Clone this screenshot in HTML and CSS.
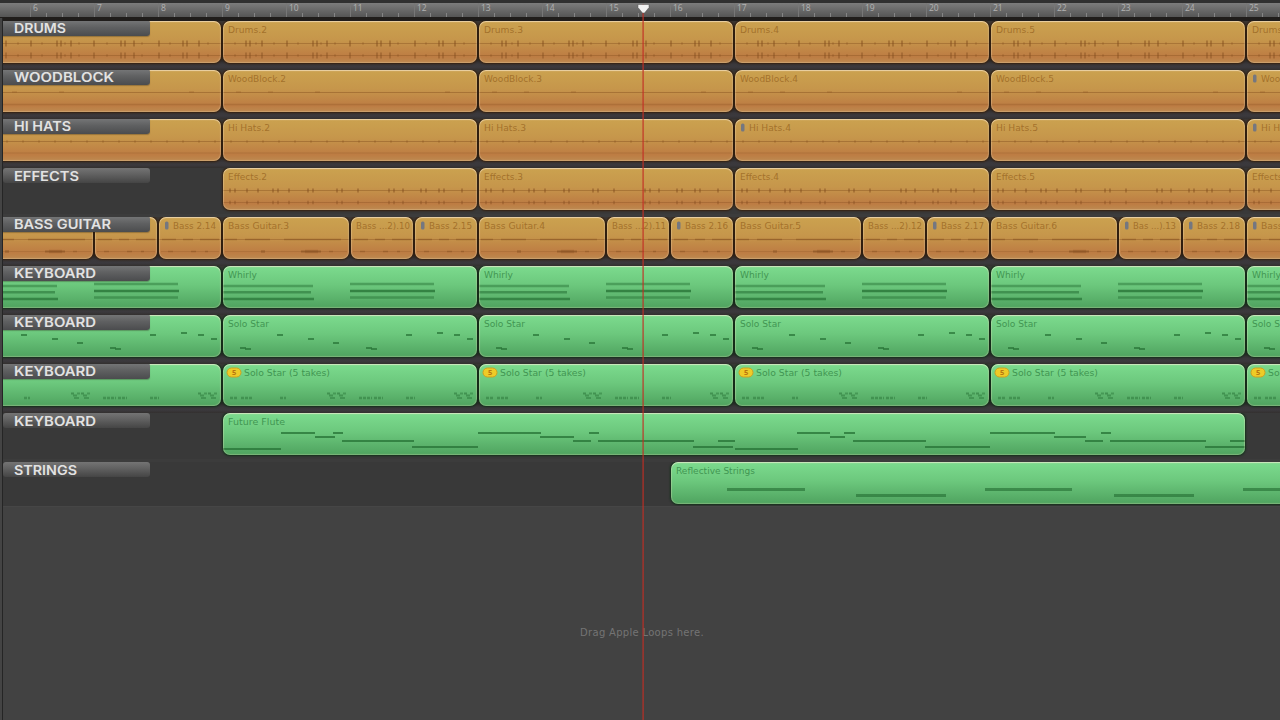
FILE: index.html
```html
<!DOCTYPE html>
<html lang="en">
<head>
<meta charset="utf-8">
<title>Timeline</title>
<link rel="stylesheet" href="styles.css">
</head>
<body>
<main class="timeline">
  <header class="ruler" id="ruler"></header>
  <section class="lanes" id="lanes"></section>
  <section class="dropzone"><p class="hint">Drag Apple Loops here.</p></section>
  <div class="playhead">
    <svg class="playhead-grip" width="13" height="10" viewBox="0 0 13 10"><path d="M1 .5H12V3.5L7.5 9H5.5L1 3.5Z"/></svg>
  </div>
</main>
<script src="timeline.js"></script>
</body>
</html>
```
FILE: styles.css
```css
body { margin: 0; background: #424242; font-family: "Open Sans", "Noto Sans", sans-serif; }
.timeline { position: relative; width: 1280px; height: 720px; overflow: hidden; display: flex; flex-direction: column; background: #424242; }
.timeline::after { content: ""; position: absolute; left: 0; top: 18px; bottom: 0; width: 2px; background: #444; border-right: 1px solid #252525; }

.ruler { box-sizing: border-box; height: 21px; flex: none; display: flex; overflow: hidden; border-top: 3px solid #303030; border-bottom: 4px solid #201d1b; background: linear-gradient(#7c7c7c, #555); }
.measure { box-sizing: border-box; flex: none; width: 64px; height: 14px; padding-left: 2px; border-left: 1px solid #777; font-size: 8.5px; line-height: 9px; color: #b2b2b2;
  background: repeating-linear-gradient(90deg, transparent 0 15px, #858585 15px 16px) 0 100% / 64px 4px no-repeat; }
.measure:first-child { margin-left: 30px; }

.lanes { flex: none; background: #393939; }
.lane { position: relative; height: 49px; display: flex; align-items: flex-start; overflow: hidden; box-sizing: border-box; padding-left: 3px; }
.lane-filled { background: linear-gradient(#3b3836 3px, #1f1c1a 9px, #1f1c1a 36px, #3a383b 43px, #3b393d 46px, #33302f 49px); }
.lane-empty { box-shadow: inset 0 -3px #3c3c3c; }
.lane:last-child { height: 45px; box-shadow: none; border-bottom: 1px solid #464646; }
.label { position: absolute; left: 3px; top: -1px; width: 147px; height: 16px; border-radius: 0 3px 3px 0; background: linear-gradient(#777879, #606162 45%, #4b4c4e); box-shadow: 0 1px 1px rgba(40, 30, 20, .3); }
.lane-empty .label { top: 0; height: 15px; background: linear-gradient(#747474, #626262 40%, #454545); box-shadow: none; border-radius: 3px; }
.label-text { fill: #e2e2e2; font: 600 13px Inter, sans-serif; }

.clip { position: relative; box-sizing: border-box; flex: none; height: 42px; margin-right: 2px; border-radius: 7px; overflow: hidden; }
.clip.audio { background: linear-gradient(#cba24f, #c6964b 45%, #bd7c43 85%, #bd8a50); box-shadow: 0 0 2px 1px #35200e; }
.clip.midi { background: linear-gradient(#7cdb8e, #6cc87d 45%, #4fa35f); box-shadow: 0 0 2px 1px #13301a; }
.clip::after { content: ""; position: absolute; inset: 0; border-radius: 7px; box-shadow: inset 0 1px 1px rgba(255, 240, 225, .5), inset 0 0 1px 1px rgba(255, 235, 200, .25); }
.clip-art { display: block; }
.clip-name { font: 9.5px "DejaVu Sans", sans-serif; }
.audio .clip-name { fill: #94601c; fill-opacity: .72; }
.midi .clip-name { fill: #338544; fill-opacity: .8; }
.wave { stroke: #7e491b; fill: none; }
.note { stroke: #297538; fill: none; }
.loop { fill: #747780; }
.badge { fill: #efcb27; stroke: #cda020; }
.badge-text { font: bold 7.5px "Open Sans", sans-serif; fill: #b97510; }

.dropzone { flex: 1; display: flex; justify-content: center; padding-top: 118px; }
.hint { margin: 0; padding-left: 4px; font: 10px/16px "DejaVu Sans", sans-serif; letter-spacing: .3px; color: #747474; }
.playhead { position: absolute; left: 642px; top: 4px; bottom: 0; width: 2px; background: linear-gradient(90deg, rgba(190, 45, 35, .4), rgba(195, 45, 35, .72)); z-index: 2; }
.playhead-grip { position: absolute; left: -5px; top: 0; fill: #f2f2f2; stroke: #555; stroke-width: .5; }
```
FILE: timeline.js
```js
const FOUR_BARS = 256;

const line = (x1, x2, y, w = 1, o = .5, cls = "wave") =>
  `<path class="${cls}" d="M${x1} ${y}H${x2}" stroke-width="${w}" stroke-opacity="${o}"/>`;
const tick = (x, y, h, o = .5, w = 1.5) =>
  `<path class="wave" d="M${x} ${y - h / 2}v${h}" stroke-width="${w}" stroke-opacity="${o}"/>`;
const note = (x1, x2, y, w = 1.8, o = .65) => line(x1, x2, y, w, o, "note");

const art = {
  drums() {
    let s = line(0, 256, 22.5, 1, .38) + line(0, 256, 34.5, 1, .34);
    for (const x of [23, 27, 39, 64, 90, 94, 104, 127, 154, 158, 167, 192, 216, 220, 232]) {
      s += tick(x, 22.5, 6, .42, 2) + tick(x, 34.5, 6, .36, 2);
    }
    for (const x of [12, 33, 51, 75, 98, 112, 140, 175, 203, 241]) s += tick(x, 22.5, 2.5, .3) + tick(x, 34.5, 2.5, .3);
    return s;
  },
  wood() {
    let s = line(0, 256, 22.5, 1, .42) + line(0, 256, 34.5, 1.3, .24);
    for (const x of [13, 45, 92, 222]) s += line(x, x + 5, 22, 1.2, .35);
    return s;
  },
  hats() {
    let s = line(0, 256, 22.5, 1, .4) + line(0, 256, 34, 1.2, .24);
    for (let x = 8; x < 256; x += 16) s += tick(x, 22.5, 2.5, .3);
    return s;
  },
  effects() {
    let s = line(0, 256, 22.5, 1, .38) + line(0, 256, 34.5, 1, .32);
    for (const x of [7, 12, 24, 35, 50, 55, 66, 85, 90, 114, 119, 135, 166, 171, 180, 198, 203, 216, 221, 239]) {
      s += tick(x, 22.5, 4, .4, 2) + tick(x, 34.5, 3.5, .32, 2);
    }
    return s;
  },
  bass(w) {
    let s = line(0, w, 22.5, 1, .35);
    const segs = w > 100 ? [[2, 14], [22, 47], [61, 118]] : [[3, 17], [24, 34], [41, 60]];
    for (const [a, b] of segs) s += line(a, b, 22.5, 1.6, .4);
    s += line(2, w - 4, 34.5, 1, .22);
    s += w > 100 ? line(38, 42, 34.5, 2.5, .4) + line(78, 98, 34.5, 2, .5) + line(82, 95, 34.5, 3.5, .25) + line(106, 110, 34.5, 1.5, .35)
                 : line(9, 14, 34.5, 1.5, .35) + line(32, 37, 34.5, 1.5, .4) + line(46, 49, 34.5, 1.5, .4);
    return s;
  },
  whirly() {
    return note(0, 90, 20, 2.5, .5) + note(0, 88, 26.2, 2.5, .6) + note(0, 91, 33, 2.5, .75) +
      note(127, 211, 18, 2.5, .5) + note(127, 212, 25, 2.5, .82) + note(127, 211, 31.5, 2.5, .5);
  },
  solo() {
    let s = "";
    for (const [x, y] of [[17, 33], [22, 34], [54, 20], [85, 24], [110, 28], [143, 33], [148, 34], [183, 20], [214, 18], [231, 20], [244, 24]]) s += note(x, x + 6, y, 1.8, .75);
    return s;
  },
  takes() {
    let s = "";
    for (const [a, b] of [[7, 15], [18, 30], [57, 63], [136, 149], [151, 160], [183, 192]])
      s += `<path class="note" d="M${a} 34H${b}" stroke-width="2.4" stroke-opacity=".5" stroke-dasharray="3 1"/>`;
    for (const x of [104, 114, 231, 241]) s += note(x, x + 3, 29.5, 1.8, .55) + note(x + 2, x + 6, 31.5, 1.8, .5) + note(x + 6, x + 9, 29.5, 1.8, .45) + note(x + 3, x + 8, 34, 1.8, .45);
    return s;
  },
  flute() {
    return [[0, 58, 36], [58, 92, 20], [92, 112, 24], [110, 120, 20], [119, 191, 28], [189, 255, 34],
      [255, 318, 20], [317, 351, 24], [350, 368, 28], [366, 376, 20], [375, 471, 28], [470, 510, 34], [495, 512, 28],
      [512, 575, 36], [574, 607, 20], [607, 622, 24], [621, 632, 20], [630, 703, 28], [702, 767, 34],
      [767, 832, 20], [831, 863, 24], [862, 880, 28], [878, 888, 20], [887, 983, 28], [982, 1022, 34], [1007, 1022, 28]]
      .map(([a, b, y]) => note(a, b, y, 1.8, .8)).join("");
  },
  strings() {
    return [[56, 134, 27.5], [185, 275, 33.5], [314, 401, 27.5], [443, 523, 33.5], [572, 640, 27.5]]
      .map(([a, b, y]) => note(a, b, y, 2.8, .68)).join("");
  },
};

// [name, text width, has loop mark]
const tracks = [
  { label: "DRUMS", w: 52, art: "drums", kind: "audio", clips: [["", 0], ["Drums.2", 39], ["Drums.3", 39], ["Drums.4", 39], ["Drums.5", 39], ["Drums.6", 39]] },
  { label: "WOODBLOCK", w: 100, art: "wood", kind: "audio", clips: [["", 0], ["WoodBlock.2", 58], ["WoodBlock.3", 58], ["WoodBlock.4", 58], ["WoodBlock.5", 58], ["WoodBlock.6", 58, 1]] },
  { label: "HI HATS", w: 57, art: "hats", kind: "audio", clips: [["", 0], ["Hi Hats.2", 42], ["Hi Hats.3", 42], ["Hi Hats.4", 42, 1], ["Hi Hats.5", 42], ["Hi Hats.6", 42, 1]] },
  { label: "EFFECTS", w: 65, art: "effects", kind: "audio", start: 256, clips: [["Effects.2", 39], ["Effects.3", 39], ["Effects.4", 39], ["Effects.5", 39], ["Effects.6", 39]] },
  { label: "BASS GUITAR", w: 97, art: "bass", kind: "audio", clips: [
    ["", 0], ["", 0], ["Bass 2.14", 43, 1],
    ["Bass Guitar.3", 61], ["Bass ...2).10", 54], ["Bass 2.15", 43, 1],
    ["Bass Guitar.4", 61], ["Bass ...2).11", 54], ["Bass 2.16", 43, 1],
    ["Bass Guitar.5", 61], ["Bass ...2).12", 54], ["Bass 2.17", 43, 1],
    ["Bass Guitar.6", 61], ["Bas ...).13", 43, 1], ["Bass 2.18", 43, 1], ["Bass Guitar.7", 61, 1]] },
  { label: "KEYBOARD", w: 82, art: "whirly", kind: "midi", clips: [["", 0], ...Array(5).fill(["Whirly", 29])] },
  { label: "KEYBOARD", w: 82, art: "solo", kind: "midi", clips: [["", 0], ...Array(5).fill(["Solo Star", 41])] },
  { label: "KEYBOARD", w: 82, art: "takes", kind: "midi", badge: true, clips: [["", 0], ...Array(5).fill(["Solo Star (5 takes)", 86])] },
  { label: "KEYBOARD", w: 82, art: "flute", kind: "midi", start: 256, width: 1024, clips: [["Future Flute", 57]] },
  { label: "STRINGS", w: 63, art: "strings", kind: "midi", start: 704, width: 640, clips: [["Reflective Strings", 79]] },
];

function clipHtml(track, [name, textWidth, loop], index) {
  const slot = track.width || (track.art === "bass" ? [128, 64, 64][index % 3] : FOUR_BARS);
  const x = track.badge ? 21 : loop ? 14 : 5;
  let s = art[track.art](slot);
  if (name) s += `<text class="clip-name" x="${x}" y="11.7" textLength="${textWidth}" lengthAdjust="spacingAndGlyphs">${name}</text>`;
  if (loop) s += `<rect class="loop" x="6" y="4.5" width="3.5" height="8" rx="1.5"/>`;
  if (track.badge && name) s += `<rect class="badge" x="4" y="4" width="14" height="9" rx="4.5"/><text class="badge-text" x="9" y="11.2">5</text>`;
  return `<div class="clip ${track.kind}" style="width:${slot - 2}px"><svg class="clip-art" width="${slot}" height="42">${s}</svg></div>`;
}

document.getElementById("lanes").innerHTML = tracks.map(t => {
  const clips = t.clips.map((c, i) => clipHtml(t, c, i)).join("");
  const offset = (t.start || 0) - 36;
  return `<div class="lane ${t.start ? "lane-empty" : "lane-filled"}">
    <div style="width:${Math.max(offset, 0)}px;margin-left:${Math.min(offset, 0)}px;flex:none"></div>${clips}
    <svg class="label" width="147" height="16"><text class="label-text" x="11" y="${t.start ? 12.5 : 13}" textLength="${t.w}" lengthAdjust="spacingAndGlyphs">${t.label}</text></svg>
  </div>`;
}).join("");

document.getElementById("ruler").innerHTML =
  Array.from({ length: 20 }, (_, i) => `<div class="measure">${i + 6}</div>`).join("");
```
